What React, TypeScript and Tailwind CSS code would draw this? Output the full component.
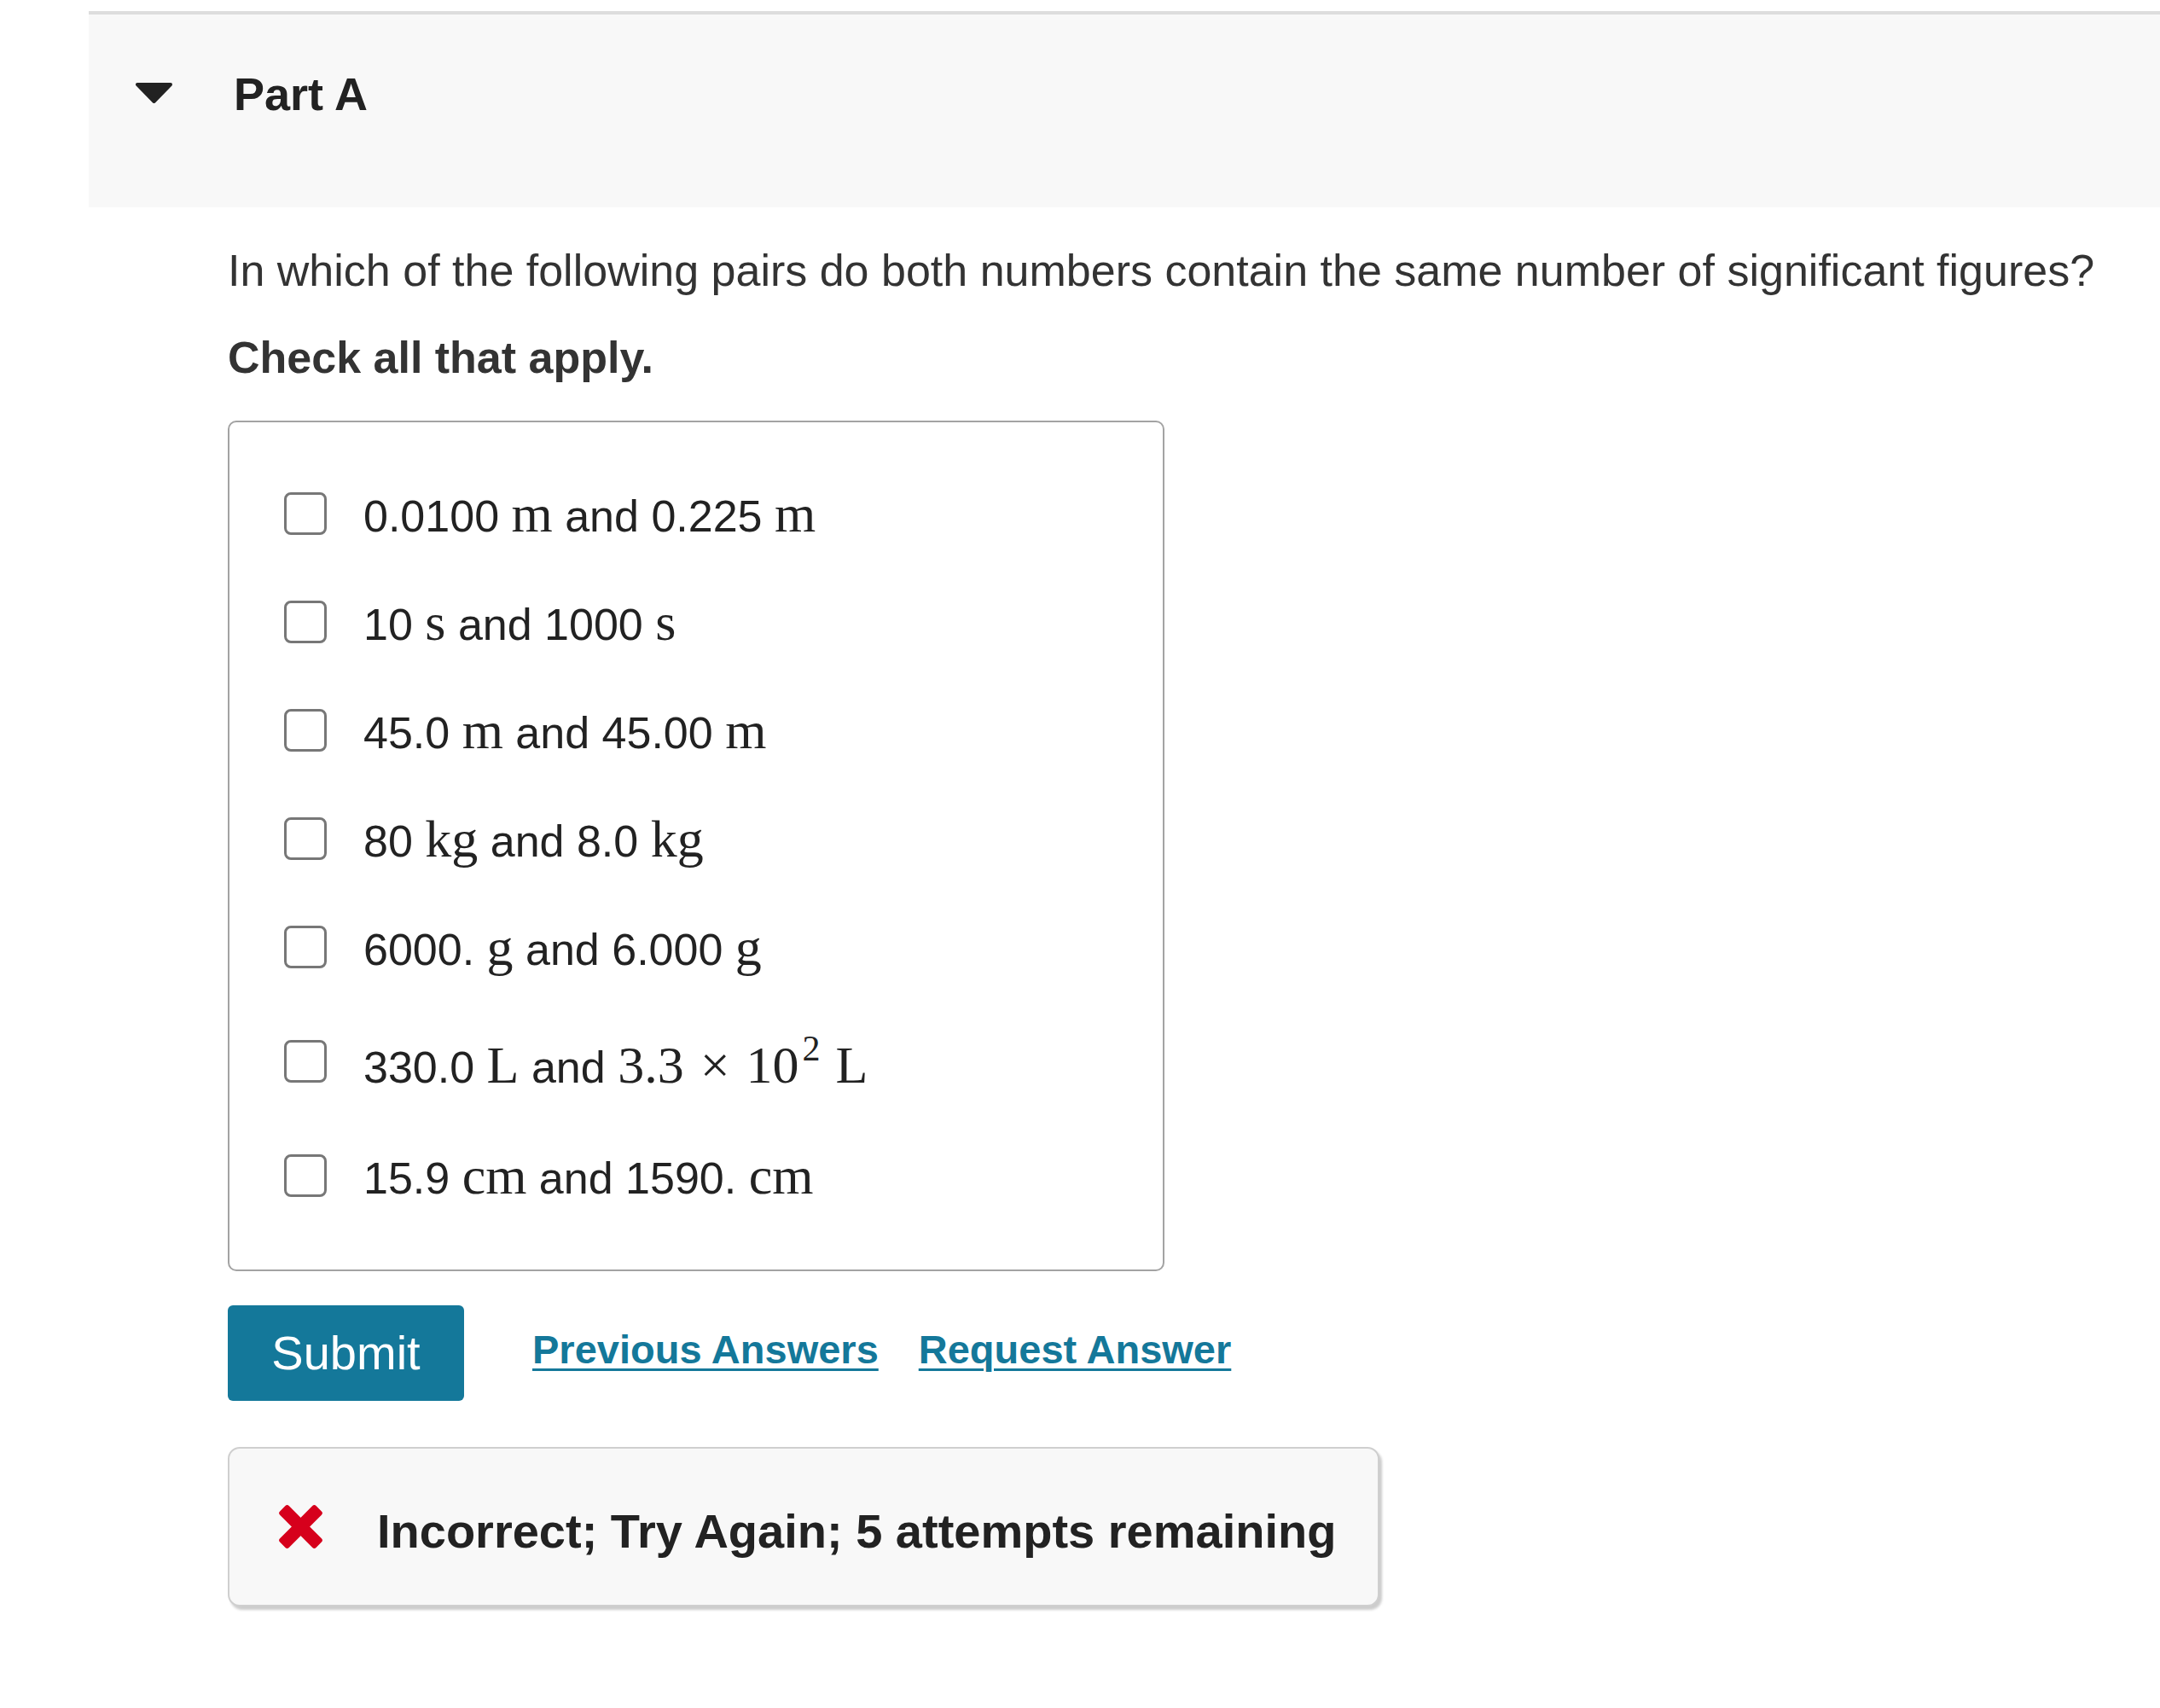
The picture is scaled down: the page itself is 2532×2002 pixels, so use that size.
import type { ReactNode } from "react";

// units and math parts are set in a serif face, like KaTeX output
function U({ children }: { children: ReactNode }) {
  return <span className="font-['Liberation_Serif',serif] text-[62px]">{children}</span>;
}

const options: ReactNode[] = [
  <>
    0.0100 <U>m</U> and 0.225 <U>m</U>
  </>,
  <>
    10 <U>s</U> and 1000 <U>s</U>
  </>,
  <>
    45.0 <U>m</U> and 45.00 <U>m</U>
  </>,
  <>
    80 <U>kg</U> and 8.0 <U>kg</U>
  </>,
  <>
    6000. <U>g</U> and 6.000 <U>g</U>
  </>,
  <>
    330.0 <U>L</U> and{" "}
    <U>
      3.3<span className="mx-[19px]">×</span>10
      <span className="ml-[4px] align-[26px] text-[42px]">2</span>
      <span className="ml-[18px]">L</span>
    </U>
  </>,
  <>
    15.9 <U>cm</U> and 1590. <U>cm</U>
  </>,
];

function Checkbox() {
  return <span className="block h-[50px] w-[50px] shrink-0 rounded-[8px] border-[3px] border-[#777777] bg-white" />;
}

function RedX() {
  return (
    <svg width="53" height="53" viewBox="0 0 53 53" className="shrink-0">
      <rect x="-3.5" y="19" width="60" height="15" rx="3" fill="#d6001c" transform="rotate(45 26.5 26.5)" />
      <rect x="-3.5" y="19" width="60" height="15" rx="3" fill="#d6001c" transform="rotate(-45 26.5 26.5)" />
    </svg>
  );
}

export default function App() {
  return (
    <div className="min-h-screen bg-white font-['Liberation_Sans',Arial,sans-serif] text-[#222]">
      <div className="pt-[13px]">
        <div className="ml-[104px] flex h-[230px] items-start border-t-4 border-[#dddddd] bg-[#f8f8f8] pl-[55px] pt-[66px]">
          <svg className="mt-[14px] shrink-0" width="43" height="24" viewBox="0 0 43 24">
            <polygon points="2,2 41,2 21.5,22" fill="#222" stroke="#222" strokeWidth="4" strokeLinejoin="round" />
          </svg>
          <h2 className="ml-[72px] text-[54px] font-bold leading-none">Part A</h2>
        </div>
      </div>

      <div className="pl-[267px]">
        <p className="mt-[48px] whitespace-nowrap text-[52px] leading-none text-[#333]">
          In which of the following pairs do both numbers contain the same number of significant figures?
        </p>
        <p className="mt-[50px] text-[52px] font-bold leading-none text-[#333]">Check all that apply.</p>

        <div className="mt-[48px] w-[1098px] rounded-[10px] border-2 border-[#a3a3a3] pb-[47px] pl-[64px] pt-[43px]">
          {options.map((opt, i) => (
            <div
              key={i}
              className={
                i === 5
                  ? "my-[7px] flex h-[127px] items-center"
                  : "flex h-[127px] items-center"
              }
            >
              <Checkbox />
              <div className="ml-[43px] whitespace-nowrap text-[52px] leading-none text-[#222]">{opt}</div>
            </div>
          ))}
        </div>

        <div className="mt-[40px] flex items-center">
          <button className="h-[112px] w-[277px] rounded-[6px] bg-[#14789a] text-[56px] leading-none text-white">
            Submit
          </button>
          <a className="ml-[80px] pb-[10px] text-[47px] font-bold leading-none text-[#14789a] underline decoration-[3px] underline-offset-[6px]">
            Previous Answers
          </a>
          <a className="ml-[47px] pb-[10px] text-[47px] font-bold leading-none text-[#14789a] underline decoration-[3px] underline-offset-[6px]">
            Request Answer
          </a>
        </div>

        <div className="mt-[54px] flex h-[187px] w-[1350px] items-center rounded-[14px] border-2 border-[#cfcfcf] bg-[#f8f8f8] pl-[57px] shadow-[3px_4px_3px_rgba(0,0,0,0.2)]">
          <RedX />
          <span className="ml-[63px] pt-[10px] text-[56px] font-bold leading-none text-[#222]">
            Incorrect; Try Again; 5 attempts remaining
          </span>
        </div>
      </div>
    </div>
  );
}
